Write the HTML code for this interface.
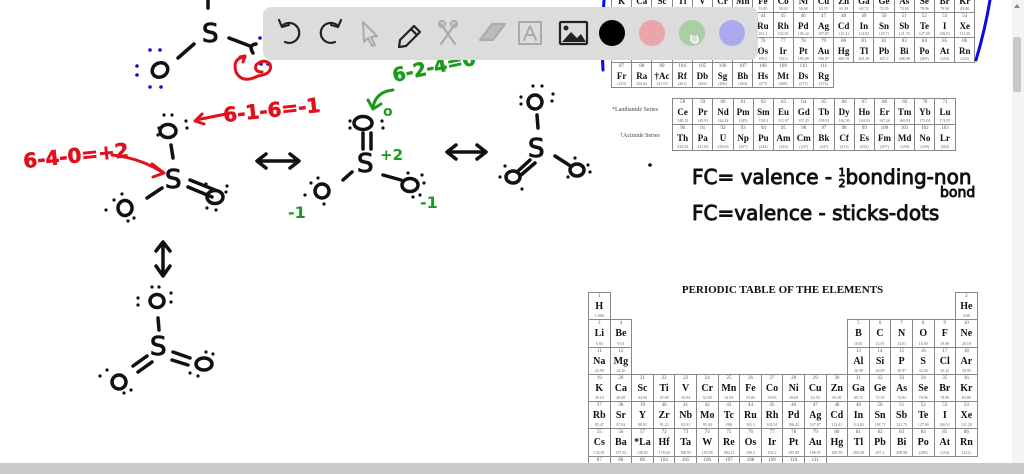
<!DOCTYPE html>
<html><head><meta charset="utf-8"><style>
*{margin:0;padding:0;box-sizing:border-box}
html,body{width:1024px;height:474px;overflow:hidden}
body{background:#fff;position:relative;font-family:"Liberation Serif",serif}
.pt{position:absolute;display:grid;}
.pt div{border:1px solid #888;margin:0 -1px -1px 0;text-align:center;color:#111;font-weight:bold;position:relative;background:#fff}
.pt div i{position:absolute;left:0;right:0;top:0;font-style:normal;font-weight:normal;font-size:5px;line-height:7px;color:#555}
.pt div b{position:absolute;left:0;right:0;bottom:0;font-weight:normal;font-size:4px;line-height:6px;color:#666}
.big{grid-template-columns:repeat(18,21.6px);grid-auto-rows:27.3px}
.big div{font-size:10px;line-height:28px}
.sm{grid-template-columns:repeat(18,20.2px);grid-auto-rows:25px}
.sm div{font-size:9px;line-height:26px}
.ln{grid-template-columns:repeat(14,20.2px);grid-auto-rows:26px}
.ln div{font-size:9px;line-height:27px}
</style></head><body>

<div class="pt sm" style="left:611px;top:-13px">
<div><i>19</i>K<b>39.10</b></div><div><i>20</i>Ca<b>40.08</b></div><div><i>21</i>Sc<b>44.96</b></div><div><i>22</i>Ti<b>47.90</b></div><div><i>23</i>V<b>50.94</b></div><div><i>24</i>Cr<b>52.00</b></div><div><i>25</i>Mn<b>54.94</b></div><div><i>26</i>Fe<b>55.85</b></div><div><i>27</i>Co<b>58.93</b></div><div><i>28</i>Ni<b>58.69</b></div><div><i>29</i>Cu<b>63.55</b></div><div><i>30</i>Zn<b>65.39</b></div><div><i>31</i>Ga<b>69.72</b></div><div><i>32</i>Ge<b>72.59</b></div><div><i>33</i>As<b>74.92</b></div><div><i>34</i>Se<b>78.96</b></div><div><i>35</i>Br<b>79.90</b></div><div><i>36</i>Kr<b>83.80</b></div>
<div><i>37</i>Rb<b>85.47</b></div><div><i>38</i>Sr<b>87.62</b></div><div><i>39</i>Y<b>88.91</b></div><div><i>40</i>Zr<b>91.22</b></div><div><i>41</i>Nb<b>92.91</b></div><div><i>42</i>Mo<b>95.94</b></div><div><i>43</i>Tc<b>(98)</b></div><div><i>44</i>Ru<b>101.1</b></div><div><i>45</i>Rh<b>102.91</b></div><div><i>46</i>Pd<b>106.42</b></div><div><i>47</i>Ag<b>107.87</b></div><div><i>48</i>Cd<b>112.41</b></div><div><i>49</i>In<b>114.82</b></div><div><i>50</i>Sn<b>118.71</b></div><div><i>51</i>Sb<b>121.75</b></div><div><i>52</i>Te<b>127.60</b></div><div><i>53</i>I<b>126.91</b></div><div><i>54</i>Xe<b>131.29</b></div>
<div><i>55</i>Cs<b>132.91</b></div><div><i>56</i>Ba<b>137.33</b></div><div><i>57</i>*La<b>138.91</b></div><div><i>72</i>Hf<b>178.49</b></div><div><i>73</i>Ta<b>180.95</b></div><div><i>74</i>W<b>183.85</b></div><div><i>75</i>Re<b>186.21</b></div><div><i>76</i>Os<b>190.2</b></div><div><i>77</i>Ir<b>192.2</b></div><div><i>78</i>Pt<b>195.08</b></div><div><i>79</i>Au<b>196.97</b></div><div><i>80</i>Hg<b>200.59</b></div><div><i>81</i>Tl<b>204.38</b></div><div><i>82</i>Pb<b>207.2</b></div><div><i>83</i>Bi<b>208.98</b></div><div><i>84</i>Po<b>(209)</b></div><div><i>85</i>At<b>(210)</b></div><div><i>86</i>Rn<b>(222)</b></div>
<div><i>87</i>Fr<b>(223)</b></div><div><i>88</i>Ra<b>226.02</b></div><div><i>89</i>†Ac<b>227.03</b></div><div><i>104</i>Rf<b>(261)</b></div><div><i>105</i>Db<b>(262)</b></div><div><i>106</i>Sg<b>(266)</b></div><div><i>107</i>Bh<b>(264)</b></div><div><i>108</i>Hs<b>(277)</b></div><div><i>109</i>Mt<b>(268)</b></div><div><i>110</i>Ds<b>(271)</b></div><div><i>111</i>Rg<b>(272)</b></div>
</div>
<div style="position:absolute;left:612px;top:107px;font-size:6px;color:#444">*Lanthanide Series</div>
<div style="position:absolute;left:620px;top:133px;font-size:6px;color:#444">†Actinide Series</div>
<div class="pt ln" style="left:672px;top:98px">
<div><i>58</i>Ce<b>140.12</b></div><div><i>59</i>Pr<b>140.91</b></div><div><i>60</i>Nd<b>144.24</b></div><div><i>61</i>Pm<b>(145)</b></div><div><i>62</i>Sm<b>150.4</b></div><div><i>63</i>Eu<b>151.97</b></div><div><i>64</i>Gd<b>157.25</b></div><div><i>65</i>Tb<b>158.93</b></div><div><i>66</i>Dy<b>162.50</b></div><div><i>67</i>Ho<b>164.93</b></div><div><i>68</i>Er<b>167.26</b></div><div><i>69</i>Tm<b>168.93</b></div><div><i>70</i>Yb<b>173.04</b></div><div><i>71</i>Lu<b>174.97</b></div>
<div><i>90</i>Th<b>232.04</b></div><div><i>91</i>Pa<b>231.04</b></div><div><i>92</i>U<b>238.03</b></div><div><i>93</i>Np<b>(237)</b></div><div><i>94</i>Pu<b>(244)</b></div><div><i>95</i>Am<b>(243)</b></div><div><i>96</i>Cm<b>(247)</b></div><div><i>97</i>Bk<b>(247)</b></div><div><i>98</i>Cf<b>(251)</b></div><div><i>99</i>Es<b>(252)</b></div><div><i>100</i>Fm<b>(257)</b></div><div><i>101</i>Md<b>(258)</b></div><div><i>102</i>No<b>(259)</b></div><div><i>103</i>Lr<b>(262)</b></div>
</div>

<div style="position:absolute;left:588px;top:284px;width:389px;text-align:center;font-weight:bold;font-size:11px;color:#111">PERIODIC TABLE OF THE ELEMENTS</div>
<div style="position:absolute;left:580px;top:290px;width:410px;height:173px;overflow:hidden">
<div class="pt big" style="left:8px;top:2px">
<div><i>1</i>H<b>1.008</b></div><div style="grid-column:18"><i>2</i>He<b>4.00</b></div>
<div><i>3</i>Li<b>6.94</b></div><div><i>4</i>Be<b>9.01</b></div><div style="grid-column:13"><i>5</i>B<b>10.81</b></div><div><i>6</i>C<b>12.01</b></div><div><i>7</i>N<b>14.01</b></div><div><i>8</i>O<b>16.00</b></div><div><i>9</i>F<b>19.00</b></div><div><i>10</i>Ne<b>20.18</b></div>
<div><i>11</i>Na<b>22.99</b></div><div><i>12</i>Mg<b>24.30</b></div><div style="grid-column:13"><i>13</i>Al<b>26.98</b></div><div><i>14</i>Si<b>28.09</b></div><div><i>15</i>P<b>30.97</b></div><div><i>16</i>S<b>32.06</b></div><div><i>17</i>Cl<b>35.45</b></div><div><i>18</i>Ar<b>39.95</b></div>
<div><i>19</i>K<b>39.10</b></div><div><i>20</i>Ca<b>40.08</b></div><div><i>21</i>Sc<b>44.96</b></div><div><i>22</i>Ti<b>47.90</b></div><div><i>23</i>V<b>50.94</b></div><div><i>24</i>Cr<b>52.00</b></div><div><i>25</i>Mn<b>54.94</b></div><div><i>26</i>Fe<b>55.85</b></div><div><i>27</i>Co<b>58.93</b></div><div><i>28</i>Ni<b>58.69</b></div><div><i>29</i>Cu<b>63.55</b></div><div><i>30</i>Zn<b>65.39</b></div><div><i>31</i>Ga<b>69.72</b></div><div><i>32</i>Ge<b>72.59</b></div><div><i>33</i>As<b>74.92</b></div><div><i>34</i>Se<b>78.96</b></div><div><i>35</i>Br<b>79.90</b></div><div><i>36</i>Kr<b>83.80</b></div>
<div><i>37</i>Rb<b>85.47</b></div><div><i>38</i>Sr<b>87.62</b></div><div><i>39</i>Y<b>88.91</b></div><div><i>40</i>Zr<b>91.22</b></div><div><i>41</i>Nb<b>92.91</b></div><div><i>42</i>Mo<b>95.94</b></div><div><i>43</i>Tc<b>(98)</b></div><div><i>44</i>Ru<b>101.1</b></div><div><i>45</i>Rh<b>102.91</b></div><div><i>46</i>Pd<b>106.42</b></div><div><i>47</i>Ag<b>107.87</b></div><div><i>48</i>Cd<b>112.41</b></div><div><i>49</i>In<b>114.82</b></div><div><i>50</i>Sn<b>118.71</b></div><div><i>51</i>Sb<b>121.75</b></div><div><i>52</i>Te<b>127.60</b></div><div><i>53</i>I<b>126.91</b></div><div><i>54</i>Xe<b>131.29</b></div>
<div><i>55</i>Cs<b>132.91</b></div><div><i>56</i>Ba<b>137.33</b></div><div><i>57</i>*La<b>138.91</b></div><div><i>72</i>Hf<b>178.49</b></div><div><i>73</i>Ta<b>180.95</b></div><div><i>74</i>W<b>183.85</b></div><div><i>75</i>Re<b>186.21</b></div><div><i>76</i>Os<b>190.2</b></div><div><i>77</i>Ir<b>192.2</b></div><div><i>78</i>Pt<b>195.08</b></div><div><i>79</i>Au<b>196.97</b></div><div><i>80</i>Hg<b>200.59</b></div><div><i>81</i>Tl<b>204.38</b></div><div><i>82</i>Pb<b>207.2</b></div><div><i>83</i>Bi<b>208.98</b></div><div><i>84</i>Po<b>(209)</b></div><div><i>85</i>At<b>(210)</b></div><div><i>86</i>Rn<b>(222)</b></div>
<div><i>87</i>Fr</div><div><i>88</i>Ra</div><div><i>89</i>†Ac</div><div><i>104</i>Rf</div><div><i>105</i>Db</div><div><i>106</i>Sg</div><div><i>107</i>Bh</div><div><i>108</i>Hs</div><div><i>109</i>Mt</div><div><i>110</i>Ds</div><div><i>111</i>Rg</div>
</div></div>

<svg width="1024" height="474" style="position:absolute;left:0;top:0" fill="none" stroke-linecap="round" stroke-linejoin="round">
<g stroke="#0a0ae0" stroke-width="3"><path d="M604 0 Q601 35 603 70"/><path d="M990 0 Q985 30 976 60"/></g>
<g font-family="DejaVu Sans,sans-serif" fill="#111" stroke="#111" stroke-width="1" font-size="26">
<text x="202" y="42">S</text><text x="165" y="188">S</text><text x="357" y="172">S</text><text x="528" y="157">S</text><text x="150" y="355">S</text>
</g>
<g stroke="#111" stroke-width="3.5">
<path d="M208 0V8"/><path d="M194 44L178 58"/><path d="M229 38L250 46"/><path d="M253 53Q248 45 256 44"/>
<ellipse cx="160" cy="70" rx="8" ry="7" transform="rotate(-30 160 70)"/>
<ellipse cx="168" cy="131" rx="8" ry="6.5"/><path d="M171 145L173 158"/>
<path d="M190 180L215 190M188 187L212 197"/><ellipse cx="215" cy="197" rx="8" ry="6.5"/>
<path d="M162 188L147 198"/><ellipse cx="125" cy="208" rx="7" ry="7.5"/>
<path d="M258 161H298M266 154L257 161L266 168M290 154L299 161L290 168"/>
<ellipse cx="363" cy="123" rx="9" ry="6.5"/><path d="M363 133V149M371 133V149"/>
<path d="M352 172L343 180"/><ellipse cx="322" cy="191" rx="7" ry="7"/>
<path d="M383 175L401 180"/><ellipse cx="410" cy="185" rx="8" ry="6.5"/>
<path d="M448 152H485M456 145L447 152L456 159M477 145L486 152L477 159"/>
<ellipse cx="535" cy="102" rx="7" ry="7"/><path d="M537 115L538 128"/>
<path d="M530 160L517 172M535 163L521 175"/><ellipse cx="513" cy="177" rx="7" ry="6"/>
<path d="M555 156L569 165"/><ellipse cx="577" cy="170" rx="7" ry="6"/>
<path d="M163 243V275M156 251L163 242L170 251M156 266L163 276L170 266"/>
<ellipse cx="157" cy="301" rx="7" ry="6.5"/><path d="M158 318L159 330"/>
<path d="M173 352L190 358M172 360L188 365"/><ellipse cx="204" cy="364" rx="8" ry="6"/>
<path d="M147 356L133 366M152 362L138 372"/><ellipse cx="119" cy="382" rx="7" ry="7"/>
</g>
<g fill="#111">
<circle cx="159" cy="128" r="1.6"/><circle cx="158" cy="135" r="1.6"/><circle cx="164" cy="115" r="1.6"/><circle cx="172" cy="115" r="1.6"/><circle cx="186" cy="121" r="1.6"/><circle cx="187" cy="128" r="1.6"/>
<circle cx="206" cy="184" r="1.6"/><circle cx="227" cy="186" r="1.6"/><circle cx="226" cy="192" r="1.6"/><circle cx="207" cy="208" r="1.6"/><circle cx="216" cy="210" r="1.6"/>
<circle cx="106" cy="210" r="1.6"/><circle cx="114" cy="200" r="1.6"/><circle cx="122" cy="194" r="1.6"/><circle cx="128" cy="221" r="1.6"/><circle cx="134" cy="218" r="1.6"/>
<circle cx="350" cy="121" r="1.6"/><circle cx="350" cy="128" r="1.6"/><circle cx="382" cy="121" r="1.6"/><circle cx="383" cy="128" r="1.6"/>
<circle cx="305" cy="195" r="1.6"/><circle cx="311" cy="183" r="1.6"/><circle cx="318" cy="178" r="1.6"/><circle cx="324" cy="204" r="1.6"/>
<circle cx="408" cy="173" r="1.6"/><circle cx="422" cy="175" r="1.6"/><circle cx="424" cy="183" r="1.6"/><circle cx="413" cy="197" r="1.6"/><circle cx="420" cy="195" r="1.6"/>
<circle cx="533" cy="86" r="1.6"/><circle cx="542" cy="86" r="1.6"/><circle cx="521" cy="97" r="1.6"/><circle cx="521" cy="104" r="1.6"/><circle cx="553" cy="94" r="1.6"/><circle cx="552" cy="101" r="1.6"/>
<circle cx="500" cy="177" r="1.6"/><circle cx="505" cy="166" r="1.6"/><circle cx="522" cy="189" r="1.6"/>
<circle cx="575" cy="158" r="1.6"/><circle cx="588" cy="165" r="1.6"/><circle cx="590" cy="172" r="1.6"/><circle cx="568" cy="177" r="1.6"/>
<circle cx="650" cy="165" r="1.8"/>
<circle cx="152" cy="287" r="1.6"/><circle cx="159" cy="287" r="1.6"/><circle cx="138" cy="298" r="1.6"/><circle cx="138" cy="305" r="1.6"/><circle cx="171" cy="293" r="1.6"/><circle cx="171" cy="302" r="1.6"/>
<circle cx="206" cy="352" r="1.6"/><circle cx="213" cy="354" r="1.6"/><circle cx="190" cy="373" r="1.6"/><circle cx="198" cy="376" r="1.6"/>
<circle cx="100" cy="376" r="1.6"/><circle cx="107" cy="370" r="1.6"/><circle cx="124" cy="393" r="1.6"/><circle cx="131" cy="390" r="1.6"/>
</g>
<g fill="#1010d0"><circle cx="150" cy="50" r="1.8"/><circle cx="160" cy="50" r="1.8"/><circle cx="137" cy="66" r="1.8"/><circle cx="137" cy="75" r="1.8"/><circle cx="150" cy="87" r="1.8"/><circle cx="161" cy="87" r="1.8"/><circle cx="260" cy="38" r="1.8"/><circle cx="261" cy="64" r="1.8"/><circle cx="268" cy="64" r="1.8"/></g>
<g stroke="#e0101c" stroke-width="3">
<path d="M245 57Q232 58 236 72Q242 84 258 76Q273 74 270 64Q264 58 256 65Q254 72 262 72"/><path d="M240 57L245 56L243 62"/>
<path d="M112 155Q140 158 162 172M152 164L164 173L153 177"/>
<path d="M196 120L226 114M202 114L195 121L204 124"/>
</g>
<g font-family="DejaVu Sans,sans-serif" font-weight="bold">
<text x="24" y="168" font-size="20" fill="#e0101c" stroke="#e0101c" stroke-width="0.6" transform="rotate(-6 24 168)">6-4-0=+2</text>
<text x="224" y="122" font-size="20" fill="#e0101c" stroke="#e0101c" stroke-width="0.6" transform="rotate(-6 224 122)">6-1-6=-1</text>
<text x="394" y="82" font-size="19" fill="#1d9a1d" stroke="#1d9a1d" stroke-width="0.6" transform="rotate(-12 394 82)">6-2-4=0</text>
<text x="383" y="116" font-size="14" fill="#1d9a1d">o</text>
<text x="380" y="160" font-size="15" fill="#1d9a1d">+2</text>
<text x="288" y="218" font-size="16" fill="#1d9a1d">-1</text>
<text x="420" y="208" font-size="16" fill="#1d9a1d">-1</text>
</g>
<g stroke="#1d9a1d" stroke-width="3"><path d="M393 90Q375 92 373 108M368 100L373 109L381 104"/></g>
<g font-family="DejaVu Sans,sans-serif" fill="#111" stroke="#111" stroke-width="0.9">
<text x="692" y="184" font-size="20">FC= valence - <tspan font-size="11" dy="-8">1</tspan><tspan font-size="11" dx="-7" dy="11">2</tspan><tspan dy="-3">bonding-non</tspan></text>
<text x="940" y="197" font-size="14">bond</text>
<text x="692" y="220" font-size="20">FC=valence - sticks-dots</text>
</g>
</svg>

<div style="position:absolute;left:263px;top:7px;width:495px;height:53px;background:#dcdcdc;border-radius:8px"></div>
<svg width="1024" height="70" style="position:absolute;left:0;top:0" fill="none" stroke-linecap="round" stroke-linejoin="round">
<g stroke="#222" stroke-width="2.2">
<path d="M282 26A10 10 0 1 1 285 42"/><path d="M279 20L282 27L289 25"/>
<path d="M338 26A10 10 0 1 0 335 42"/><path d="M341 20L338 27L331 25"/>
<path d="M400 40L414 26L420 32L406 46L399 47Z"/><path d="M411 29L417 35"/>
<rect x="560" y="22" width="27" height="22" rx="1"/>
</g>
<path d="M562 42L571 32L577 38L581 34L586 42Z" fill="#222"/><circle cx="566" cy="28" r="2.5" fill="#222"/>
<g stroke="#aaa" stroke-width="2"><path d="M363 22L377 36L371 37L375 45L372 46L368 38L364 42Z"/><path d="M441 24L455 44M455 24L441 44"/><circle cx="442" cy="24" r="3"/><circle cx="454" cy="24" r="3"/><path d="M480 40L492 24H505L493 40Z" fill="#bbb"/><rect x="519" y="22" width="22" height="22"/><path d="M524 40L530 26L536 40M526 35H534"/></g>
<circle cx="612" cy="33" r="13" fill="#000"/><circle cx="652" cy="33" r="13" fill="#e8a6aa"/><circle cx="692" cy="33" r="13" fill="#a9d0a4"/><circle cx="732" cy="33" r="13" fill="#abaaee"/>
<path d="M691 35V40Q692 43 696 43Q699 42 698 39L697 36" stroke="#fff" stroke-width="1.2" fill="#ddd"/>
</svg>

<div style="position:absolute;left:1012px;top:0;width:12px;height:463px;background:#f4f4f4"></div>
<div style="position:absolute;left:1013px;top:37px;width:8px;height:55px;background:#c8c8c8;border-radius:2px"></div>
<div style="position:absolute;left:1014px;top:4px;width:0;height:0;border-left:3px solid transparent;border-right:3px solid transparent;border-bottom:4px solid #888"></div>
<div style="position:absolute;left:0;top:463px;width:1024px;height:11px;background:#c9c9c9;z-index:5"></div>
</body></html>
